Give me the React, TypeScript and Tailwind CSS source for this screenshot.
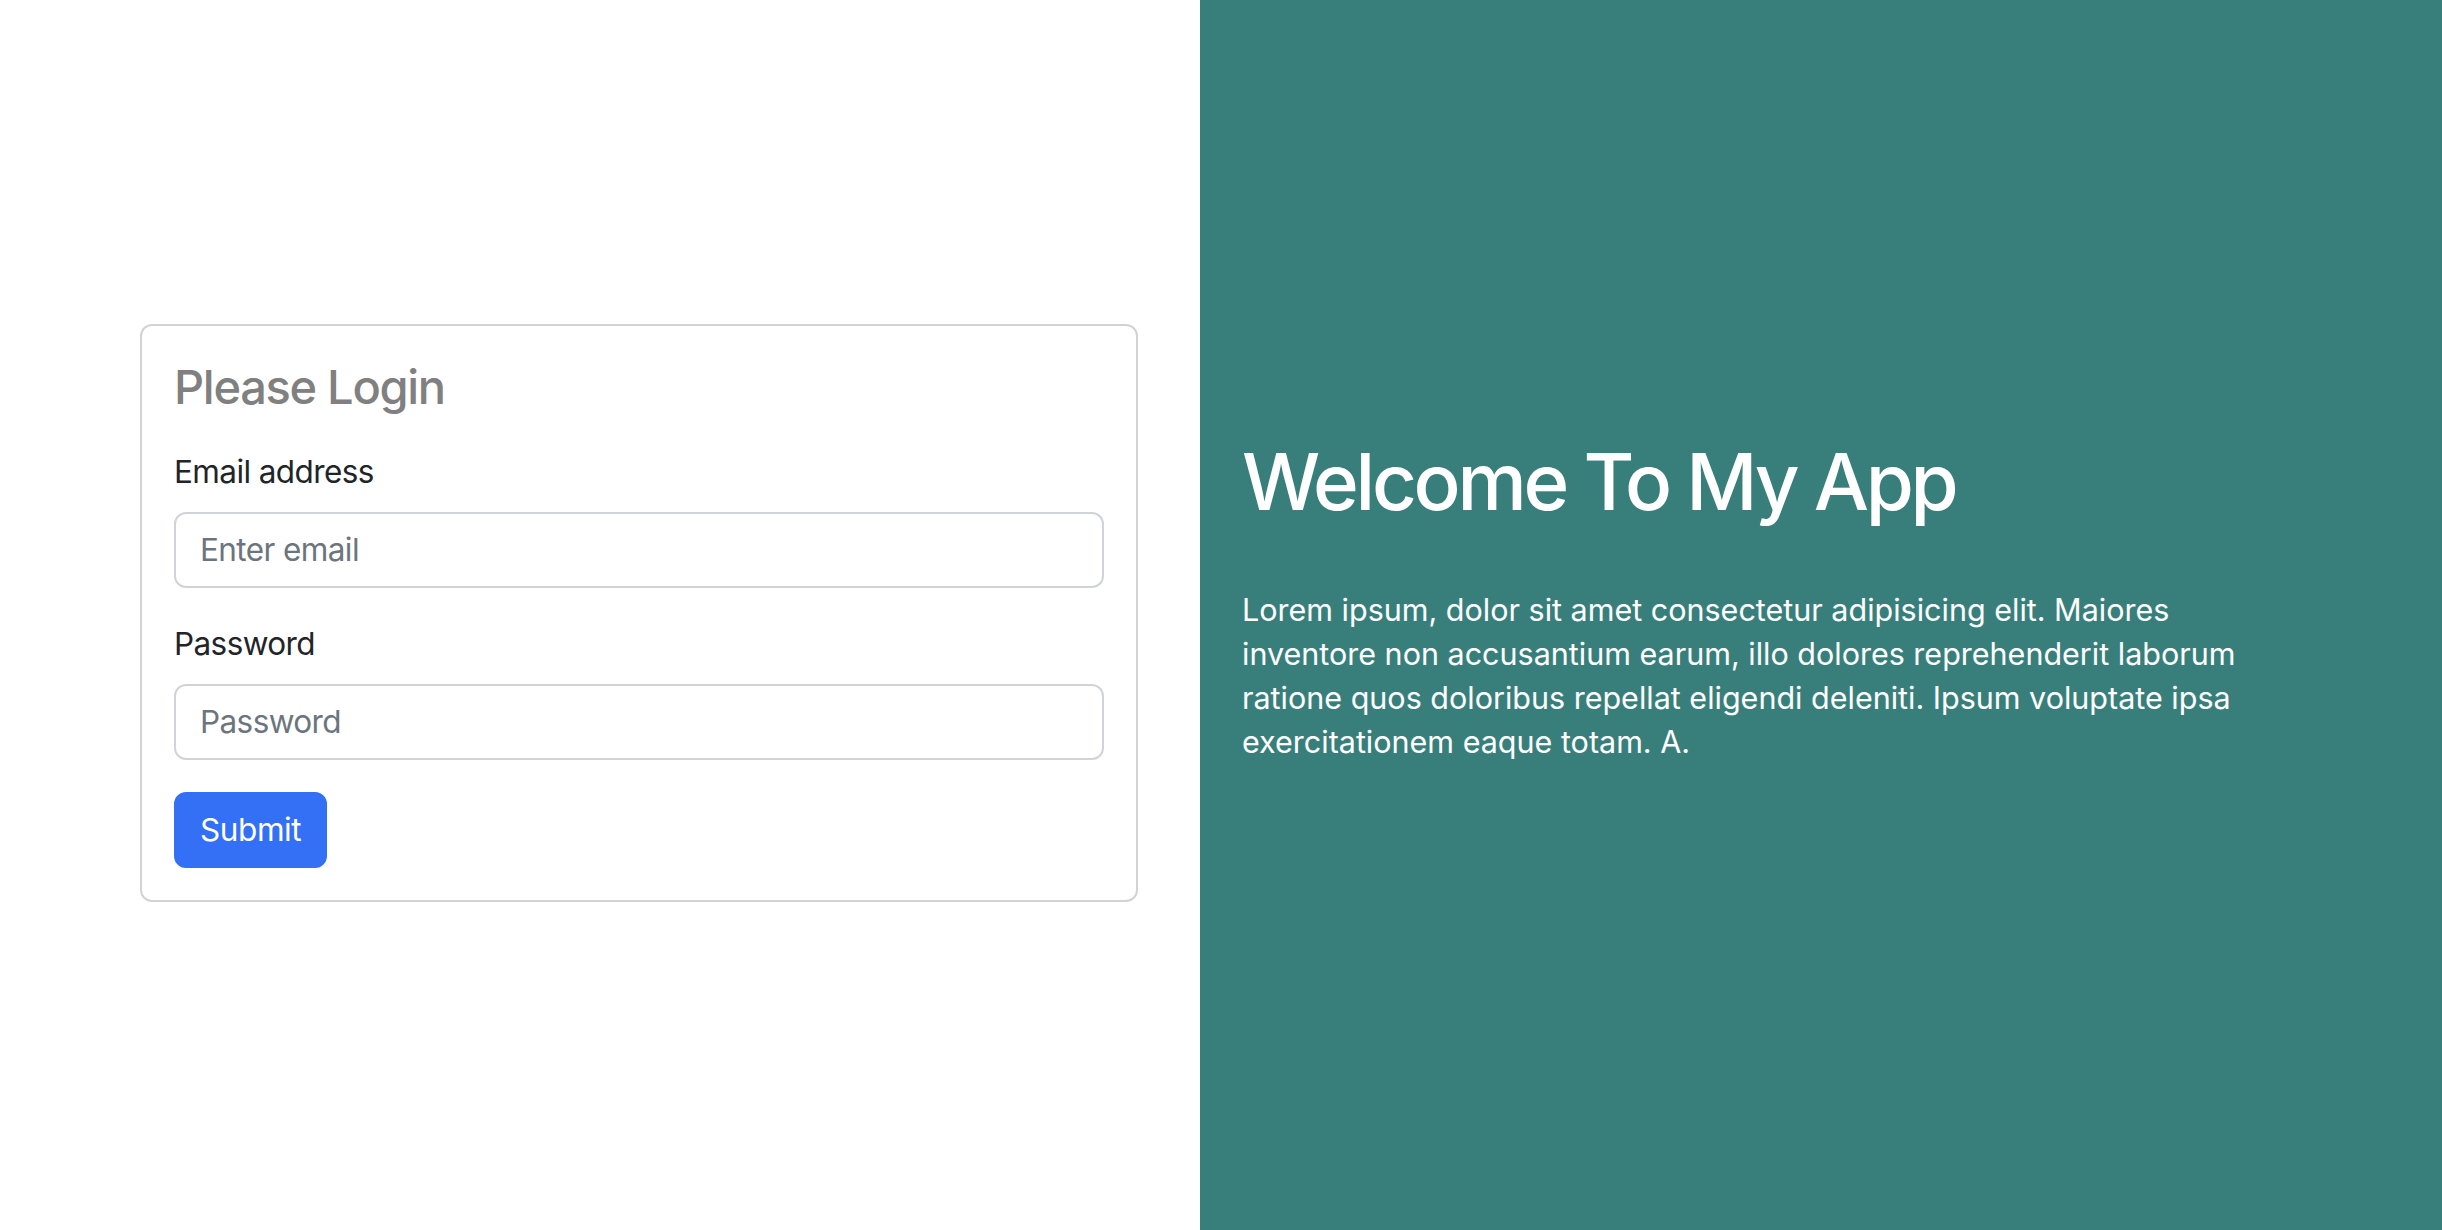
import React from "react";

export default function App() {
  return (
    <div
      className="flex w-full h-[1230px] overflow-hidden bg-white"
      style={{ fontFamily: "Inter, 'Noto Sans', 'Liberation Sans', sans-serif" }}
    >
      <div className="w-[1200px] shrink-0 flex items-center pl-[140px] pr-[62px] pb-[4px]">
        <div className="w-full border-2 border-[#d3d3d3] rounded-[12px] p-[32px]">
          <h4 className="text-[47px] leading-[57.6px] font-medium tracking-[-1.3px] text-[#808080] mb-[32px]">
            Please Login
          </h4>
          <div className="mb-[32px]">
            <label className="block text-[31.5px] leading-[48px] tracking-[-0.6px] text-[#212529] mb-[16px]">
              Email address
            </label>
            <input
              type="email"
              placeholder="Enter email"
              className="block w-full h-[76px] border-2 border-[#d0d4d9] rounded-[12px] px-[24px] text-[31.5px] tracking-[-0.6px] text-[#212529] placeholder:text-[#6c757d] outline-none"
            />
          </div>
          <div className="mb-[32px]">
            <label className="block text-[31.5px] leading-[48px] tracking-[-0.6px] text-[#212529] mb-[16px]">
              Password
            </label>
            <input
              type="password"
              placeholder="Password"
              className="block w-full h-[76px] border-2 border-[#d0d4d9] rounded-[12px] px-[24px] text-[31.5px] tracking-[-0.6px] text-[#212529] placeholder:text-[#6c757d] outline-none"
            />
          </div>
          <button className="h-[76px] px-[24px] border-2 border-[#3470f5] bg-[#3470f5] rounded-[12px] text-white text-[31.5px] tracking-[-0.4px] leading-[48px]">
            Submit
          </button>
        </div>
      </div>
      <div className="flex-1 bg-[#387f7c] flex flex-col justify-center pl-[42px] text-white">
        <h1 className="text-[78px] leading-[96px] font-medium tracking-[-3.3px] mb-[58px]">
          Welcome To My App
        </h1>
        <p className="w-[1010px] text-[30.5px] leading-[44px] mb-[32px]">
          Lorem ipsum, dolor sit amet consectetur adipisicing elit. Maiores inventore non
          accusantium earum, illo dolores reprehenderit laborum ratione quos doloribus repellat
          eligendi deleniti. Ipsum voluptate ipsa exercitationem eaque totam. A.
        </p>
      </div>
    </div>
  );
}
